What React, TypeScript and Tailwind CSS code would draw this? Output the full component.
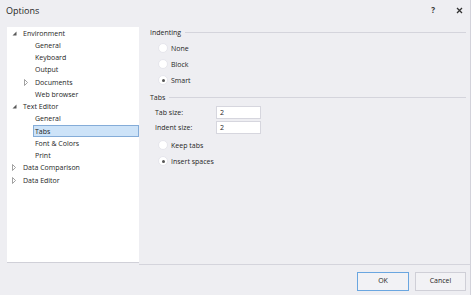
import React from "react";

const font = "font-['Open_Sans','Noto_Sans',sans-serif]";

type Node = {
  label: string;
  level: 0 | 1;
  arrow?: "open" | "closed";
  selected?: boolean;
};

const tree: Node[] = [
  { label: "Environment", level: 0, arrow: "open" },
  { label: "General", level: 1 },
  { label: "Keyboard", level: 1 },
  { label: "Output", level: 1 },
  { label: "Documents", level: 1, arrow: "closed" },
  { label: "Web browser", level: 1 },
  { label: "Text Editor", level: 0, arrow: "open" },
  { label: "General", level: 1 },
  { label: "Tabs", level: 1, selected: true },
  { label: "Font & Colors", level: 1 },
  { label: "Print", level: 1 },
  { label: "Data Comparison", level: 0, arrow: "closed" },
  { label: "Data Editor", level: 0, arrow: "closed" },
];

function Arrow({ kind }: { kind: "open" | "closed" }) {
  if (kind === "open") {
    return (
      <svg width="5" height="5" viewBox="0 0 5 5" className="block">
        <path d="M4.5 0.5 L4.5 4.5 L0.5 4.5 Z" fill="#595959" />
      </svg>
    );
  }
  return (
    <svg width="4" height="7" viewBox="0 0 4 7" className="block">
      <path d="M0.5 0.5 L3.5 3.5 L0.5 6.5 Z" fill="none" stroke="#8a8a8a" strokeWidth="0.8" />
    </svg>
  );
}

function TreeRow({ node }: { node: Node }) {
  const indent = node.level === 0 ? "pl-[5px]" : "pl-[17px]";
  return (
    <div className={`flex h-[12.25px] items-center ${indent}`}>
      <div className="flex w-[9px] shrink-0 items-center justify-start">
        {node.arrow && <Arrow kind={node.arrow} />}
      </div>
      <div
        className={`flex h-full flex-1 items-center pl-[1px] ${
          node.selected ? "border border-[#84acd8] bg-[#cde3f8]" : "border border-transparent"
        }`}
      >
        <span className="whitespace-nowrap leading-none">{node.label}</span>
      </div>
    </div>
  );
}

function GroupHeader({ title }: { title: string }) {
  return (
    <div className="flex h-[10px] items-center gap-[4px]">
      <span className="leading-none">{title}</span>
      <div className="h-px flex-1 bg-[#d4d4dc]" />
    </div>
  );
}

function Radio({ label, checked }: { label: string; checked?: boolean }) {
  return (
    <div className="flex h-[16px] items-center gap-[3px] pl-[8px]">
      <div className="flex h-[10px] w-[10px] items-center justify-center rounded-full border border-[#e6e6ec] bg-white">
        {checked && <div className="h-[3px] w-[3px] rounded-full bg-[#555]" />}
      </div>
      <span className="leading-none">{label}</span>
    </div>
  );
}

function SizeField({ label, value }: { label: string; value: string }) {
  return (
    <div className="flex h-[13px] items-center pl-[5px]">
      <span className="w-[61px] leading-none">{label}</span>
      <div className="flex h-full w-[45px] items-center border border-[#d6d6de] bg-white pl-[3px]">
        <span className="leading-none">{value}</span>
      </div>
    </div>
  );
}

export default function App() {
  return (
    <div className={`h-[295px] w-[474px] overflow-hidden bg-white ${font} text-[#1e1e1e]`}>
      <div className="flex h-full w-[471px] flex-col border-r border-[#d2d2da] bg-[#eeeef2]">
        {/* Title bar */}
        <div className="flex h-[27px] shrink-0 items-start pt-[4px]">
          <span className="pl-[6px] text-[9px] leading-[13px] text-[#1e1e1e]">Options</span>
          <div className="flex-1" />
          <span className="mt-[1px] text-[8px] font-bold leading-[10px] text-[#333]">?</span>
          <svg width="7" height="7" viewBox="0 0 7 7" className="ml-[21px] mr-[7px] mt-[3px]">
            <path d="M1 1 L6 6 M6 1 L1 6" stroke="#333" strokeWidth="1.3" />
          </svg>
        </div>

        {/* Body */}
        <div className="flex h-[238px] shrink-0 pl-[7px] text-[7px]">
          <div className="h-[236px] w-[132px] border-b border-[#d0d0d8] bg-white">
            {tree.map((n, i) => (
              <TreeRow key={i} node={n} />
            ))}
          </div>
          <div className="flex-1 border-b border-[#d4d4dc] pl-[11px] pr-[4px]">
            <GroupHeader title="Indenting" />
            <div className="mt-[3px]">
              <Radio label="None" />
              <Radio label="Block" />
              <Radio label="Smart" checked />
            </div>
            <div className="mt-[4px]">
              <GroupHeader title="Tabs" />
            </div>
            <div className="mt-[4px] flex flex-col gap-[2px]">
              <SizeField label="Tab size:" value="2" />
              <SizeField label="Indent size:" value="2" />
            </div>
            <div className="mt-[3px]">
              <Radio label="Keep tabs" />
              <Radio label="Insert spaces" checked />
            </div>
          </div>
        </div>

        {/* Buttons */}
        <div className="flex flex-1 items-start justify-end gap-[6px] pr-[4px] pt-[7px] text-[7px]">
          <button className="flex h-[19px] w-[52px] items-center justify-center border border-[#6aa6e0] bg-[#f2f2f5] text-[#1e1e1e]">
            OK
          </button>
          <button className="flex h-[19px] w-[51px] items-center justify-center border border-[#cfcfd7] bg-[#f2f2f5] text-[#1e1e1e]">
            Cancel
          </button>
        </div>
      </div>
    </div>
  );
}
